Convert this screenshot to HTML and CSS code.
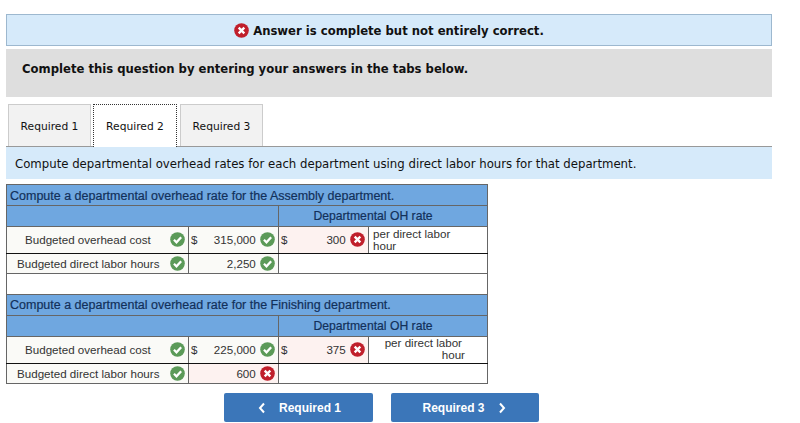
FILE: index.html
```html
<!DOCTYPE html>
<html lang="en">
<head>
<meta charset="utf-8">
<title>Departmental overhead rates</title>
<link rel="stylesheet" href="styles.css">
</head>
<body>
<svg class="defs" width="0" height="0" aria-hidden="true">
  <symbol id="ok" viewBox="0 0 16 16"><circle cx="8" cy="8" r="7.800" fill="#5b9a58"/><path d="M4.200 8.300l2.700 2.700 5-5.500" fill="none" stroke="#fff" stroke-width="2.400"/></symbol>
  <symbol id="no" viewBox="0 0 16 16"><circle cx="8" cy="8" r="7.800" fill="#c01f2b"/><path d="M5 5l6 6M11 5l-6 6" fill="none" stroke="#fff" stroke-width="2.500"/></symbol>
</svg>
<main class="page">
  <div class="notice"><svg class="icon"><use href="#no"/></svg> Answer is complete but not entirely correct.</div>
  <div class="prompt">Complete this question by entering your answers in the tabs below.</div>
  <div class="tabs">
    <div class="tab">Required 1</div>
    <div class="tab tab-active">Required 2</div>
    <div class="tab">Required 3</div>
  </div>
  <div class="instruction">Compute departmental overhead rates for each department using direct labor hours for that department.</div>
  <table class="sheet">
    <colgroup><col class="c1"><col class="c2"><col class="c3"><col class="c4"></colgroup>
    <tr class="title"><td colspan="4">Compute a departmental overhead rate for the Assembly department.</td></tr>
    <tr class="head"><td colspan="2"></td><td colspan="2">Departmental OH rate</td></tr>
    <tr class="row-a">
      <td><div class="label"><span class="name">Budgeted overhead cost</span><svg class="icon"><use href="#ok"/></svg></div></td>
      <td><div class="amt"><span>$</span><span class="val">315,000 <svg class="icon"><use href="#ok"/></svg></span></div></td>
      <td class="bad"><div class="amt"><span>$</span><span class="val">300 <svg class="icon"><use href="#no"/></svg></span></div></td>
      <td class="unit">per direct labor<br>hour</td>
    </tr>
    <tr class="row-b">
      <td><div class="label"><span class="name">Budgeted direct labor hours</span><svg class="icon"><use href="#ok"/></svg></div></td>
      <td><div class="amt"><span></span><span class="val">2,250 <svg class="icon"><use href="#ok"/></svg></span></div></td>
      <td colspan="2"></td>
    </tr>
    <tr class="spacer"><td colspan="4"></td></tr>
    <tr class="title"><td colspan="4">Compute a departmental overhead rate for the Finishing department.</td></tr>
    <tr class="head"><td colspan="2"></td><td colspan="2">Departmental OH rate</td></tr>
    <tr class="row-a">
      <td><div class="label"><span class="name">Budgeted overhead cost</span><svg class="icon"><use href="#ok"/></svg></div></td>
      <td><div class="amt"><span>$</span><span class="val">225,000 <svg class="icon"><use href="#ok"/></svg></span></div></td>
      <td class="bad"><div class="amt"><span>$</span><span class="val">375 <svg class="icon"><use href="#no"/></svg></span></div></td>
      <td class="unit unit-right"><span class="unit-line">per direct labor</span><br>hour</td>
    </tr>
    <tr class="row-b">
      <td><div class="label"><span class="name">Budgeted direct labor hours</span><svg class="icon"><use href="#ok"/></svg></div></td>
      <td class="bad"><div class="amt"><span></span><span class="val">600 <svg class="icon"><use href="#no"/></svg></span></div></td>
      <td colspan="2"></td>
    </tr>
  </table>
  <nav class="nav">
    <div class="btn btn-prev"><svg class="chev" viewBox="0 0 8 12"><path d="M6 1.500L2 6l4 4.500" fill="none" stroke="#fff" stroke-width="2"/></svg>Required 1</div>
    <div class="btn btn-next">Required 3<svg class="chev" viewBox="0 0 8 12"><path d="M2 1.500L6 6l-4 4.500" fill="none" stroke="#fff" stroke-width="2"/></svg></div>
  </nav>
</main>
</body>
</html>
```
FILE: styles.css
```css
* { box-sizing: border-box; }
html, body { margin: 0; background: #fff; }
body { overflow: hidden; }
.defs { position: absolute; }
.page { width: 772px; padding: 14px 0 0 6px; font-family: "DejaVu Sans", Verdana, sans-serif; color: #111; }
.icon { width: 15px; height: 15px; vertical-align: -3px; }
.notice { height: 32px; padding-top: 1px; border: 1px solid #9db8cf; background: #d6eafa; display: flex; align-items: center; justify-content: center; gap: 4px; font-size: 11.65px; font-weight: 700; }
.prompt { height: 48px; margin-top: 3px; background: #dedede; padding: 13px 16px 0; font-size: 11.65px; font-weight: 700; }
.tabs { display: flex; height: 43px; margin-top: 7px; padding-left: 2px; border-bottom: 1px solid #999; }
.tab { width: 83px; height: 42px; padding-top: 1px; border: 1px solid #ccc; border-bottom: 0; background: #f2f2f2; font-size: 10.7px; display: flex; align-items: center; justify-content: center; }
.tab-active { width: 84px; margin: 0 3px 0 2px; padding-top: 0; background: #fff; border: 1px dotted #333; border-bottom: 0; height: 43px; }
.instruction { height: 32px; padding: 1px 0 0 9px; background: #d6eafa; display: flex; align-items: center; font-size: 11.72px; }
.sheet { margin-top: 5px; width: 481px; border-collapse: collapse; table-layout: fixed; font-family: "Liberation Sans", Arial, sans-serif; font-size: 11.6px; color: #333; }
.c1 { width: 182px; } .c2 { width: 90px; } .c3 { width: 90px; } .c4 { width: 119px; }
.sheet td { border: 1px solid #666; padding: 0; }
.title td { height: 21px; padding: 1px 0 0 3px; background: #6fa7e0; color: #12305a; font-size: 12.5px; -webkit-text-stroke: 0.2px #12305a; }
.spacer + .title td { padding-top: 0; }
.head td { height: 21px; background: #6fa7e0; color: #12305a; text-align: center; font-size: 12.2px; padding-right: 20px; -webkit-text-stroke: 0.2px #12305a; }
.row-a td { height: 27px; background: #fff; border-bottom-color: #111; }
.row-b td { height: 20px; background: #fff; }
.row-a td:first-child, .row-b td:first-child, .row-a td:nth-child(2), .row-b td:nth-child(2) { background: #fafaf7; }
.sheet td.bad { background: #fdf2f0; }
.spacer td { height: 21px; background: #fff; }
.label { display: flex; align-items: center; justify-content: space-between; padding: 0 3px 0 10px; }
.row-a .label, .row-a .amt { padding-bottom: 2px; }
.row-a .name { margin-left: 8px; }
.amt { display: flex; justify-content: space-between; padding: 0 3px 0 2px; align-items: center; }
.val .icon { margin-left: 1px; }
.unit { padding: 0 3px 0 4px !important; line-height: 12px; }
.unit-right { text-align: right; padding-right: 22px !important; padding-bottom: 2px !important; }
.unit-line { margin-right: 3px; }
.nav { display: flex; gap: 18px; margin: 9px 0 0 218px; }
.btn { width: 149px; height: 29px; border-radius: 2px; background: #3b76b9; color: #fff; font-family: "Liberation Sans", Arial, sans-serif; font-size: 12px; font-weight: 700; display: flex; align-items: center; justify-content: center; gap: 13px; }
.btn-prev { padding-left: 2px; }
.btn-next { width: 148px; padding-right: 2px; }
.chev { width: 8px; height: 12px; }
```
